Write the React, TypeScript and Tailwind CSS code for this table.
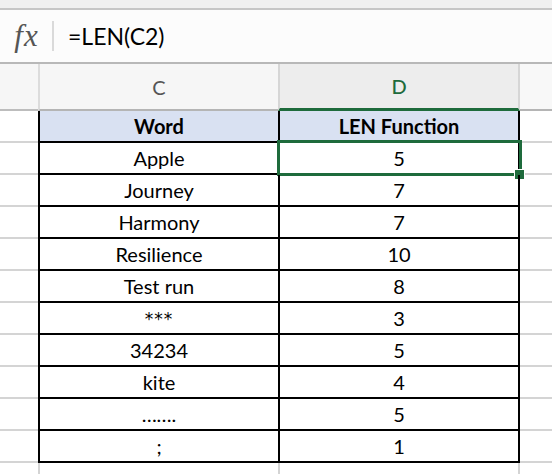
const rows: [string, string][] = [
  ["Apple", "5"],
  ["Journey", "7"],
  ["Harmony", "7"],
  ["Resilience", "10"],
  ["Test run", "8"],
  ["***", "3"],
  ["34234", "5"],
  ["kite", "4"],
  ["…….", "5"],
  [";", "1"],
];

const font = { fontFamily: "Lato, 'Liberation Sans', sans-serif" };

export default function App() {
  return (
    <div className="w-[552px] h-[474px] overflow-hidden bg-white text-black" style={font}>
      {/* top strip */}
      <div className="h-[10px] bg-[#f0f0f0] border-b-2 border-[#c6c6c6]" />

      {/* formula bar */}
      <div className="h-[54px] flex items-center bg-[#fcfcfc] border-b-2 border-[#b8b8b8]">
        <div className="w-[52px] flex justify-center pl-[1px] pb-[2px]">
          <span
            className="italic text-[31px] leading-none text-[#555] tracking-[1px]"
            style={{ fontFamily: "'Liberation Serif', serif" }}
          >
            fx
          </span>
        </div>
        <div className="w-[2px] h-[30px] bg-[#dadada]" />
        <div className="pl-[14px] text-[23px] leading-none">=LEN(C2)</div>
      </div>

      {/* column headers */}
      <div className="grid grid-cols-[38px_240px_242px_32px] h-[47px]">
        <div className="bg-[#f6f6f6] border-b-2 border-[#bdbdbd]" />
        <div className="bg-[#f6f6f6] border-l-2 border-l-[#dcdcdc] border-b-2 border-b-[#b5b5b5] flex items-center justify-center text-[20px] text-[#555]">
          C
        </div>
        <div className="bg-[#ededed] border-l-2 border-l-[#d6d6d6] border-r-2 border-r-[#d6d6d6] border-b-[3px] border-b-[#1e6b3c] flex items-center justify-center text-[20px] text-[#1e6b3c] font-medium">
          D
        </div>
        <div className="bg-[#f8f8f8] border-b-2 border-[#b5b5b5]" />
      </div>

      {/* header row of table */}
      <div className="grid grid-cols-[38px_240px_242px_32px] h-[32px]">
        <div className="border-b-2 border-[#d4d4d4]" />
        <div className="bg-[#d9e1f2] border-l-2 border-b-2 border-black flex items-center justify-center text-[20px] font-bold">
          Word
        </div>
        <div className="bg-[#d9e1f2] border-l-2 border-r-2 border-b-2 border-black flex items-center justify-center text-[20px] font-bold">
          LEN Function
        </div>
        <div className="border-b-2 border-[#d4d4d4]" />
      </div>

      {rows.map(([word, len], i) => (
        <div key={i} className="grid grid-cols-[38px_240px_242px_32px] h-[32px]">
          <div className="border-b-2 border-[#d4d4d4]" />
          <div className="border-l-2 border-b-2 border-black flex items-center justify-center text-[20px]">
            {word === "***" ? (
              <span className="text-[17px] tracking-[1px] pt-[3px]" style={{ fontFamily: "'DejaVu Sans', sans-serif" }}>
                {word}
              </span>
            ) : (
              word
            )}
          </div>
          <div className="relative border-l-2 border-r-2 border-b-2 border-black flex items-center justify-center text-[20px]">
            {len}
            {i === 0 && (
              <>
                <div className="absolute -top-[3px] -left-[3px] -right-[4px] -bottom-[3px] border-[3px] border-[#1e6b3c]" />
                <div className="absolute -bottom-[7px] -right-[7px] w-[11px] h-[11px] bg-[#1e6b3c] border border-white" />
              </>
            )}
          </div>
          <div className="border-b-2 border-[#d4d4d4]" />
        </div>
      ))}

      {/* partial row below */}
      <div className="grid grid-cols-[38px_240px_242px_32px] h-[20px]">
        <div />
        <div className="border-l-2 border-[#d4d4d4]" />
        <div className="border-l-2 border-r-2 border-[#d4d4d4]" />
        <div />
      </div>
    </div>
  );
}
